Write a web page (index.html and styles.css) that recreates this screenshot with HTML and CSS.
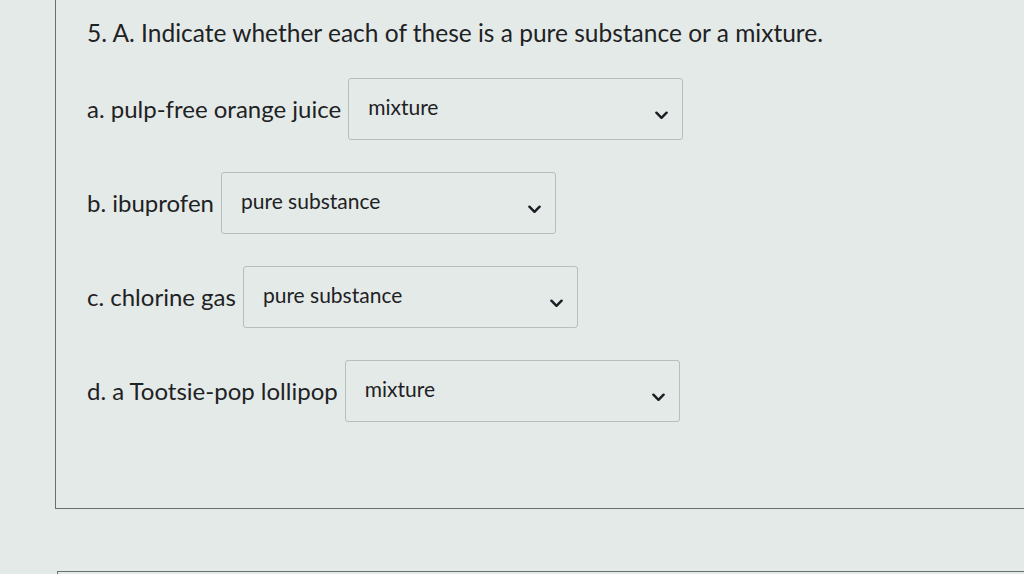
FILE: index.html
```html
<!DOCTYPE html>
<html>
<head>
<meta charset="utf-8">
<link rel="stylesheet" href="styles.css">
</head>
<body>
<div class="page">
  <div class="card">
    <h1 class="title">5. A. Indicate whether each of these is a pure substance or a mixture.</h1>
    <div class="rows">
      <div class="row">
        <span class="label">a. pulp-free orange juice</span>
        <div class="select"><span>mixture</span><svg class="chev" viewBox="0 0 14 9"><path d="M1.5 1.5 L7 7 L12.5 1.5"/></svg></div>
      </div>
      <div class="row">
        <span class="label">b. ibuprofen</span>
        <div class="select"><span>pure substance</span><svg class="chev" viewBox="0 0 14 9"><path d="M1.5 1.5 L7 7 L12.5 1.5"/></svg></div>
      </div>
      <div class="row">
        <span class="label">c. chlorine gas</span>
        <div class="select"><span>pure substance</span><svg class="chev" viewBox="0 0 14 9"><path d="M1.5 1.5 L7 7 L12.5 1.5"/></svg></div>
      </div>
      <div class="row">
        <span class="label">d. a Tootsie-pop lollipop</span>
        <div class="select"><span>mixture</span><svg class="chev" viewBox="0 0 14 9"><path d="M1.5 1.5 L7 7 L12.5 1.5"/></svg></div>
      </div>
    </div>
  </div>
  <div class="next"></div>
</div>
</body>
</html>
```
FILE: styles.css
```css
html, body {
  margin: 0;
  padding: 0;
  background: #e4eae8;
  font-family: Lato, "Open Sans", sans-serif;
  color: #1e2224;
  overflow: hidden;
}
.page {
  width: 1024px;
  height: 574px;
  display: flex;
  flex-direction: column;
}
.card {
  margin-left: 55px;
  height: 490px;
  border-left: 1.5px solid #6a6f6f;
  border-bottom: 1.5px solid #6a6f6f;
  padding: 18px 0 0 31px;
  box-sizing: content-box;
}
.title {
  margin: 0;
  font-size: 24.5px;
  font-weight: 400;
  line-height: 30px;
}
.rows {
  margin-top: 30px;
  display: flex;
  flex-direction: column;
  gap: 32px;
}
.row {
  display: flex;
  align-items: center;
  gap: 7px;
}
.label {
  font-size: 24px;
  line-height: 28px;
}
.select {
  width: 335px;
  height: 62px;
  box-sizing: border-box;
  border: 1.2px solid #b9bdbd;
  border-radius: 3px;
  display: flex;
  align-items: center;
  justify-content: space-between;
  padding: 0 14px 0 19px;
  font-size: 21px;
}
.select span {
  margin-top: -6px;
}
.chev {
  width: 13px;
  height: 9px;
  margin-top: 12px;
  fill: none;
  stroke: #1c1c22;
  stroke-width: 2.6;
  stroke-linecap: round;
  stroke-linejoin: round;
}
.next {
  margin-top: 62px;
  margin-left: 57px;
  flex: 1;
  border-top: 1.5px solid #6a6f6f;
  border-left: 1.5px solid #6a6f6f;
}
```
